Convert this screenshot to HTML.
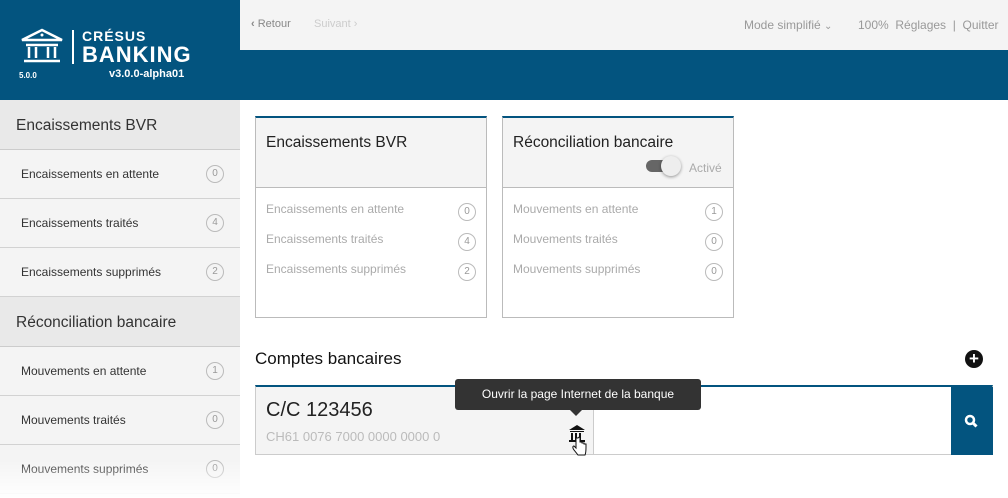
<!DOCTYPE html>
<html><head><meta charset="utf-8"><style>
*{box-sizing:border-box;margin:0;padding:0}
body{width:1008px;height:498px;overflow:hidden;background:#fff;font-family:"Liberation Sans",sans-serif;position:relative}
.abs{position:absolute}
.blue{background:#03547f}
.side{left:0;top:100px;width:240px;height:398px;background:#f4f4f4}
.sh{height:50px;background:#e9e9e9;border-bottom:1px solid #ccc;font-size:15.5px;color:#333;padding:17px 0 0 16px}
.si{height:49px;border-bottom:1px solid #d2d2d2;font-size:12px;color:#333;padding:17px 0 0 21px;position:relative}
.badge{position:absolute;width:18px;height:18px;border:1px solid #bbb;border-radius:50%;font-size:10px;color:#999;text-align:center;line-height:16px}
.si .badge{right:16px;top:15px}
.card{top:116px;width:232px;height:202px;border:1px solid #bbb;border-top:2px solid #03547f}
.ch{height:70px;background:#f4f4f4;border-bottom:1px solid #bbb;padding:16px 0 0 10px;font-size:15.5px;color:#222;position:relative}
.cl{font-size:12px;color:#aaa;height:30px;padding:0 10px;position:relative;line-height:14px}
.cl .badge{right:10px;top:1px}
</style></head><body>
<div class="abs blue" style="left:0;top:0;width:240px;height:100px"></div>
<div class="abs blue" style="left:240px;top:50px;width:768px;height:50px"></div>
<div class="abs" style="left:240px;top:0;width:768px;height:50px;background:#f4f4f4"></div>
<svg class="abs" style="left:20px;top:28px" width="44" height="36" viewBox="0 0 44 36" fill="none" stroke="#fff" stroke-width="2.5"><path d="M2 12 L22 2 L42 12 Z"/><circle cx="22" cy="7" r="1.5" fill="#fff" stroke="none"/><path d="M6 17 H38 M9 19 V30 M16 19 V30 M28 19 V30 M35 19 V30 M4 33 H40"/></svg>
<div class="abs" style="left:72px;top:30px;width:2px;height:34px;background:#fff"></div>
<div class="abs" style="left:82px;top:28px;color:#fff;font-weight:bold;font-size:14px;letter-spacing:1px">CRÉSUS</div>
<div class="abs" style="left:82px;top:42px;color:#fff;font-weight:bold;font-size:22px;letter-spacing:1px">BANKING</div>
<div class="abs" style="left:19px;top:71px;color:#fff;font-size:8px;font-weight:bold">5.0.0</div>
<div class="abs" style="left:109px;top:68px;color:#fff;font-size:11px;font-weight:bold">v3.0.0-alpha01</div>
<div class="abs" style="left:251px;top:18px;font-size:11px;color:#888"><b>‹</b> Retour</div>
<div class="abs" style="left:314px;top:18px;font-size:11px;color:#ccc">Suivant ›</div>
<div class="abs" style="left:744px;top:18px;font-size:12px;color:#999">Mode simplifié <span style="font-size:10px">⌄</span></div>
<div class="abs" style="left:858px;top:18px;font-size:12px;color:#999">100%&nbsp; Réglages &nbsp;|&nbsp; Quitter</div>
<div class="abs side">
<div class="sh">Encaissements BVR</div>
<div class="si">Encaissements en attente<span class="badge">0</span></div>
<div class="si">Encaissements traités<span class="badge">4</span></div>
<div class="si">Encaissements supprimés<span class="badge">2</span></div>
<div class="sh">Réconciliation bancaire</div>
<div class="si">Mouvements en attente<span class="badge">1</span></div>
<div class="si">Mouvements traités<span class="badge">0</span></div>
<div class="si">Mouvements supprimés<span class="badge">0</span></div>
</div>
<div class="abs" style="left:0;top:460px;width:240px;height:38px;background:linear-gradient(rgba(255,255,255,0),#fff)"></div>
<div class="abs card" style="left:255px">
<div class="ch">Encaissements BVR</div>
<div style="height:14px"></div>
<div class="cl">Encaissements en attente<span class="badge">0</span></div>
<div class="cl">Encaissements traités<span class="badge">4</span></div>
<div class="cl">Encaissements supprimés<span class="badge">2</span></div>
</div>
<div class="abs card" style="left:502px">
<div class="ch">Réconciliation bancaire
<div class="abs" style="left:143px;top:42px;width:26px;height:12px;border-radius:6px;background:#666"></div>
<div class="abs" style="left:158px;top:38px;width:20px;height:20px;border-radius:50%;background:#eee;box-shadow:0 1px 3px rgba(0,0,0,.4)"></div>
<div class="abs" style="left:186px;top:43px;font-size:12px;color:#aaa">Activé</div>
</div>
<div style="height:14px"></div>
<div class="cl">Mouvements en attente<span class="badge">1</span></div>
<div class="cl">Mouvements traités<span class="badge">0</span></div>
<div class="cl">Mouvements supprimés<span class="badge">0</span></div>
</div>
<div class="abs" style="left:255px;top:349px;font-size:17px;color:#111">Comptes bancaires</div>
<div class="abs" style="left:965px;top:350px;width:18px;height:18px;border-radius:50%;background:#111;color:#fff;font-size:17px;font-weight:bold;text-align:center;line-height:18px">+</div>
<div class="abs" style="left:255px;top:385px;width:738px;height:70px;border:1px solid #ccc;border-top:2px solid #03547f"></div>
<div class="abs" style="left:256px;top:387px;width:338px;height:67px;background:#f4f4f4;border-right:1px solid #ccc"></div>
<div class="abs" style="left:266px;top:399px;font-size:20px;color:#222">C/C 123456</div>
<div class="abs" style="left:266px;top:429px;font-size:13px;color:#bbb">CH61 0076 7000 0000 0000 0</div>
<div class="abs blue" style="left:951px;top:387px;width:42px;height:68px"></div>
<svg class="abs" style="left:964px;top:414px" width="14" height="14" viewBox="0 0 14 14"><circle cx="6" cy="6" r="4" fill="none" stroke="#fff" stroke-width="2.5"/><path d="M9 9 L12.5 12.5" stroke="#fff" stroke-width="3"/></svg>
<svg class="abs" style="left:568px;top:424px" width="20" height="36" viewBox="0 0 20 36"><path d="M1 6 L9 1 L17 6 Z M2 7 H16 V8 H2 Z M3 9 h2 v7 h-2z M7 9 h2 v7 h-2z M11 9 h2 v7 h-2z M1 16 H17 V18 H1 Z" fill="#111"/><path d="M8 14 v10 l-2-2 c-2 0-1 3 0 4 l4 5 h7 c1-2 1-5 1-8 v-3 h-2 v-1 h-2 v-1 h-2 v-4 c0-1-2-1-2 0z" fill="#fff" stroke="#111" stroke-width="1"/></svg>
<div class="abs" style="left:455px;top:379px;width:246px;height:31px;background:#333;border-radius:3px;color:#fff;font-size:12px;text-align:center;line-height:31px">Ouvrir la page Internet de la banque</div>
<div class="abs" style="left:570px;top:410px;width:0;height:0;border-left:6px solid transparent;border-right:6px solid transparent;border-top:6px solid #333"></div>
</body></html>
